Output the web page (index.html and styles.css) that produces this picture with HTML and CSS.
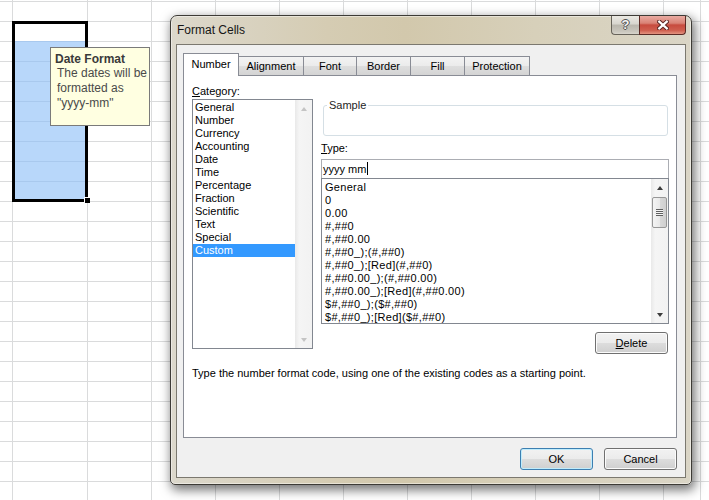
FILE: index.html
```html
<!DOCTYPE html>
<html>
<head>
<meta charset="utf-8">
<title>Format Cells</title>
<link rel="stylesheet" href="styles.css">
</head>
<body>
<div class="sheet">
  <div class="cols">
    <div class="col c0"></div><div class="col c1"></div><div class="col c2"></div>
    <div class="col cn"></div><div class="col cn"></div><div class="col cn"></div><div class="col cn"></div>
    <div class="col cn"></div><div class="col cn"></div><div class="col cn"></div><div class="col cn"></div>
    <div class="col clast"></div>
  </div>

  <div class="selection">
    <div class="active-cell"></div>
    <div class="sel-fill"></div>
    <div class="fill-handle"></div>
  </div>

  <div class="tooltip">
    <div class="tip-title">Date Format</div>
    <div class="tip-body">The dates will be<br>formatted as<br>"yyyy-mm"</div>
  </div>

  <div class="window">
    <div class="titlebar">
      <span class="title">Format Cells</span>
      <div class="caption-buttons">
        <div class="cap-help">?</div>
        <div class="cap-close">
          <svg width="12" height="10" viewBox="0 0 12 10">
            <path d="M2.2 1.6 L9.8 8.4 M9.8 1.6 L2.2 8.4" stroke="#5b2521" stroke-width="4.2" stroke-linecap="square" fill="none"/>
            <path d="M2.2 1.6 L9.8 8.4 M9.8 1.6 L2.2 8.4" stroke="#ffffff" stroke-width="2.2" stroke-linecap="square" fill="none"/>
          </svg>
        </div>
      </div>
    </div>

    <div class="client">
      <div class="tabs">
        <div class="tab selected t-number">Number</div>
        <div class="tab t-align">Alignment</div>
        <div class="tab t-font">Font</div>
        <div class="tab t-border">Border</div>
        <div class="tab t-fill">Fill</div>
        <div class="tab t-prot">Protection</div>
      </div>

      <div class="tabpage">
        <div class="columns">
          <div class="left">
            <div class="label"><u>C</u>ategory:</div>
            <div class="listbox cat">
              <div class="items">
                <div class="item">General</div>
                <div class="item">Number</div>
                <div class="item">Currency</div>
                <div class="item">Accounting</div>
                <div class="item">Date</div>
                <div class="item">Time</div>
                <div class="item">Percentage</div>
                <div class="item">Fraction</div>
                <div class="item">Scientific</div>
                <div class="item">Text</div>
                <div class="item">Special</div>
                <div class="item sel">Custom</div>
              </div>
              <div class="vscroll disabled">
                <div class="sb-btn"><span class="arrow up"></span></div>
                <div class="sb-track"></div>
                <div class="sb-btn"><span class="arrow down"></span></div>
              </div>
            </div>
          </div>

          <div class="right">
            <fieldset class="sample">
              <legend>Sample</legend>
              <div class="sample-body"></div>
            </fieldset>
            <div class="label type-label"><u>T</u>ype:</div>
            <div class="textbox">yyyy mm<span class="caret"></span></div>
            <div class="listbox types">
              <div class="items">
                <div class="item">General</div>
                <div class="item">0</div>
                <div class="item">0.00</div>
                <div class="item">#,##0</div>
                <div class="item">#,##0.00</div>
                <div class="item">#,##0_);(#,##0)</div>
                <div class="item">#,##0_);[Red](#,##0)</div>
                <div class="item">#,##0.00_);(#,##0.00)</div>
                <div class="item">#,##0.00_);[Red](#,##0.00)</div>
                <div class="item">$#,##0_);($#,##0)</div>
                <div class="item">$#,##0_);[Red]($#,##0)</div>
              </div>
              <div class="vscroll">
                <div class="sb-btn"><span class="arrow up"></span></div>
                <div class="sb-track">
                  <div class="thumb"><div class="grip"></div></div>
                </div>
                <div class="sb-btn"><span class="arrow down"></span></div>
              </div>
            </div>
            <div class="row-end">
              <button class="btn"><u>D</u>elete</button>
            </div>
          </div>
        </div>
        <p class="desc">Type the number format code, using one of the existing codes as a starting point.</p>
      </div>

      <div class="footer">
        <button class="btn ok">OK</button>
        <button class="btn">Cancel</button>
      </div>
    </div>
  </div>
</div>
</body>
</html>
```

FILE: styles.css
```css
* { box-sizing: border-box; }
html, body { margin: 0; padding: 0; }
body {
  width: 709px;
  height: 500px;
  overflow: hidden;
  background: #ffffff;
  font-family: "Liberation Sans", Arial, sans-serif;
}

/* ---------- spreadsheet background ---------- */
.sheet {
  position: relative;
  width: 709px;
  height: 500px;
  overflow: hidden;
  background-image: repeating-linear-gradient(to bottom,
    transparent 0, transparent 1px,
    #dadbdc 1px, #dadbdc 2px,
    transparent 2px, transparent 20px);
}
.cols { display: flex; height: 100%; }
.col { flex: none; height: 100%; border-right: 1px solid #dadbdc; }
.c0 { width: 13px; }
.c1 { width: 75px; }
.c2 { width: 64px; }
.cn { width: 64px; }
.clast { width: 37px; }

.selection {
  position: absolute;
  left: 12px;
  top: 21px;
  width: 76px;
  height: 181px;
  border: 3px solid #000;
  display: flex;
  flex-direction: column;
}
.active-cell { height: 17px; background: #fff; }
.sel-fill {
  flex: 1;
  background-color: #b8d7fa;
  background-image: repeating-linear-gradient(to bottom,
    #a9c9ee 0, #a9c9ee 1px, transparent 1px, transparent 20px);
}
.fill-handle {
  position: absolute;
  right: -5px;
  bottom: -4px;
  width: 6px;
  height: 6px;
  background: #000;
  border-left: 1px solid #fff;
  border-top: 1px solid #fff;
}

.tooltip {
  position: absolute;
  left: 50px;
  top: 47px;
  width: 100px;
  height: 79px;
  background: #ffffe1;
  border: 1px solid #7a7a7a;
  padding: 4px 0 0 4px;
  font-size: 12px;
  color: #4a4a4a;
}
.tip-title { font-weight: bold; line-height: 14px; color: #3a3a3a; }
.tip-body { line-height: 15px; padding-left: 2px; white-space: nowrap; }

/* ---------- dialog window ---------- */
.window {
  position: absolute;
  left: 170px;
  top: 15px;
  width: 522px;
  height: 470px;
  border: 1px solid #3d3b36;
  border-radius: 7px 7px 5px 5px;
  background: linear-gradient(90deg, #dcd8cc 0%, #d5ccb3 30%, #d2c8ac 45%, #d7d0ba 70%, #dad5c6 100%);
  padding: 0 5px 6px 5px;
  display: flex;
  flex-direction: column;
  box-shadow: 2px 4px 11px 1px rgba(0, 0, 0, 0.55), inset 0 0 0 1px rgba(255, 255, 255, 0.45);
}
.titlebar {
  height: 28px;
  flex: none;
  display: flex;
  align-items: center;
}
.title {
  padding-left: 1px;
  font-size: 12px;
  color: #151515;
}
.caption-buttons {
  margin-left: auto;
  align-self: flex-start;
  display: flex;
  height: 19px;
}
.cap-help {
  width: 28px;
  height: 19px;
  border: 1px solid #67635a;
  border-top: none;
  border-right: none;
  border-radius: 0 0 0 4px;
  background: linear-gradient(#ebe9e3, #d7d5ce 45%, #b9b6ad 50%, #c9c6bd 85%, #d8d5cc);
  color: #f4f4f4;
  text-align: center;
  font-size: 13px;
  font-weight: bold;
  line-height: 18px;
  text-shadow: 1px 0 0 #505050, -1px 0 0 #505050, 0 1px 0 #505050, 0 -1px 0 #505050;
}
.cap-close {
  width: 47px;
  height: 19px;
  border: 1px solid #5c2a25;
  border-top: none;
  border-radius: 0 0 4px 0;
  background: linear-gradient(#e9aba2, #d98275 40%, #c74b3e 50%, #cf5f4f 80%, #e39380);
  display: flex;
  align-items: center;
  justify-content: center;
}

.client {
  flex: 1;
  background: #f0f0f0;
  border: 1px solid #7b786f;
  display: flex;
  flex-direction: column;
  padding: 8px 0 0 6px;
  font-size: 11px;
  color: #000;
}

/* tabs */
.tabs {
  display: flex;
  align-items: flex-end;
  height: 22px;
  flex: none;
}
.tab {
  height: 19px;
  margin-left: -1px;
  border: 1px solid #898c95;
  border-bottom: none;
  background: linear-gradient(#f3f3f3, #ebebeb 50%, #dedede 50%, #d4d4d4);
  text-align: center;
  line-height: 18px;
  white-space: nowrap;
}
.tab.selected {
  margin-left: 0;
  height: 23px;
  margin-bottom: -1px;
  background: #fff;
  line-height: 20px;
  position: relative;
  z-index: 1;
}
.t-number { width: 56px; }
.t-align { width: 66px; }
.t-font { width: 54px; }
.t-border { width: 55px; }
.t-fill { width: 55px; }
.t-prot { width: 66px; }

.tabpage {
  width: 494px;
  height: 363px;
  flex: none;
  border: 1px solid #898c95;
  background: #fff;
  padding: 8px 7px 0 8px;
}
.columns { display: flex; gap: 8px; }
.left { width: 121px; flex: none; }
.right { width: 348px; flex: none; }
.label { line-height: 14px; height: 14px; }

.listbox {
  border: 1px solid #828790;
  background: #fff;
  display: flex;
  overflow: hidden;
}
.cat { margin-top: 1px; height: 250px; }
.items {
  flex: 1;
  min-width: 0;
  overflow: hidden;
  padding-top: 1px;
  line-height: 13px;
}
.item { padding-left: 2px; white-space: nowrap; }
.item.sel { background: #3399ff; color: #fff; }
.types .items { padding-top: 2px; }
.types .item { padding-left: 3px; letter-spacing: 0.3px; }

/* scrollbars */
.vscroll {
  width: 17px;
  flex: none;
  display: flex;
  flex-direction: column;
  background: linear-gradient(90deg, #e9e9e9, #f5f5f5 25%, #f2f2f2);
}
.sb-btn {
  height: 17px;
  flex: none;
  display: flex;
  align-items: center;
  justify-content: center;
}
.sb-track { flex: 1; }
.arrow {
  width: 0;
  height: 0;
  border-left: 3.5px solid transparent;
  border-right: 3.5px solid transparent;
}
.arrow.up { border-bottom: 4px solid #3c3c3c; }
.arrow.down { border-top: 4px solid #3c3c3c; }
.disabled .arrow.up { border-bottom-color: #c4c4c4; }
.disabled .arrow.down { border-top-color: #c4c4c4; }
.thumb {
  margin: 1px 1px 0 1px;
  height: 31px;
  border: 1px solid #979797;
  border-radius: 2px;
  background: linear-gradient(90deg, #f4f4f4, #e9e9e9 50%, #d9d9d9 51%, #cfcfcf);
  display: flex;
  align-items: center;
  justify-content: center;
}
.grip {
  width: 7px;
  height: 7px;
  background: repeating-linear-gradient(to bottom, #5f5f5f 0, #5f5f5f 1px, #f4f4f4 1px, #f4f4f4 2px);
}

/* right side controls */
.sample {
  margin: 14px 1px 0 2px;
  padding: 0 6px 0 3px;
  border: 1px solid #d5dfe5;
  border-radius: 3px;
  min-width: 0;
}
.sample legend {
  padding: 0 2px;
  line-height: 14px;
  color: #1e1e1e;
}
.sample-body { height: 23px; }
.type-label { margin-top: 5px; }
.textbox {
  margin-top: 4px;
  height: 19px;
  border: 1px solid #abadb3;
  border-bottom: none;
  padding-left: 1px;
  line-height: 18px;
  background: #fff;
  white-space: nowrap;
}
.caret {
  display: inline-block;
  width: 1px;
  height: 13px;
  background: #000;
  vertical-align: -2px;
  margin-left: 1px;
}
.types { height: 146px; }
.row-end {
  display: flex;
  justify-content: flex-end;
  margin-top: 8px;
  padding-right: 1px;
}

.btn {
  width: 73px;
  height: 22px;
  padding: 0;
  border: 1px solid #707070;
  border-radius: 3px;
  background: linear-gradient(#f2f2f2, #ebebeb 50%, #dddddd 50%, #cfcfcf);
  box-shadow: inset 0 0 0 1px #fbfbfb;
  font-family: "Liberation Sans", Arial, sans-serif;
  font-size: 11px;
  color: #000;
}
.btn.ok {
  border-color: #3c7fb1;
  box-shadow: inset 0 0 0 1px #c0ecfc;
}

.desc {
  margin: 12px 0 0 0;
  line-height: 14px;
}

.footer {
  display: flex;
  justify-content: flex-end;
  gap: 11px;
  margin-top: 10px;
  padding-right: 8px;
}
```
